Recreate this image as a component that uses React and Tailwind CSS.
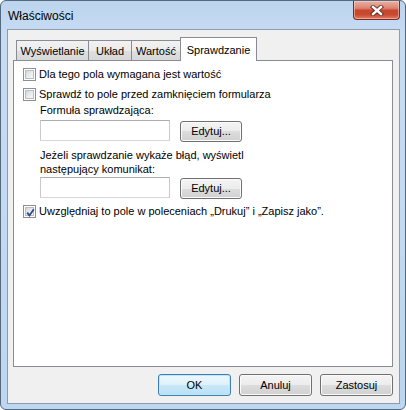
import React from "react";

const font = { fontFamily: '"Liberation Sans", Arial, sans-serif' };

function Check({ checked }) {
  return (
    <span className="relative flex h-[13px] w-[13px] shrink-0 border border-[#8e8f8f] bg-white p-px">
      <span className="flex-1 border border-[#b9bdc3] bg-[linear-gradient(135deg,#d2d5da_0%,#ebecee_55%,#f8f8f8_100%)]" />
      {checked && (
        <svg className="absolute left-[1px] top-[1px]" width="11" height="11" viewBox="0 0 11 11">
          <path d="M2.2 5.6 L4.4 8.4 L8.8 2.2" fill="none" stroke="#2c4a8e" strokeWidth="1.8" strokeLinejoin="miter" />
        </svg>
      )}
    </span>
  );
}

function Btn({ children, w = "w-[73px]", h = "h-[22px]", primary = false }) {
  return (
    <div
      className={`${w} ${h} flex items-center justify-center rounded-[3px] border text-[11px] text-black ${
        primary
          ? "border-[#3c7fb1] bg-[linear-gradient(to_bottom,#eef8fd_0%,#def1fb_50%,#c9e8f9_50%,#b9e0f6_100%)] shadow-[inset_0_0_0_1px_#bfe6fb]"
          : "border-[#707070] bg-[linear-gradient(to_bottom,#f4f4f4_0%,#ececec_50%,#dddddd_50%,#d0d0d0_100%)] shadow-[inset_0_0_0_1px_#fbfbfb]"
      }`}
    >
      {children}
    </div>
  );
}

function Input() {
  return <div className="h-[21px] w-[130px] border border-[#abadb3] border-l-[#c8cad0] border-r-[#c8cad0] border-b-[#d3d7dc] bg-white" />;
}

function Tab({ label, w, first }) {
  return (
    <div
      className={`${w} ${first ? "" : "-ml-px"} flex h-[20px] items-center justify-center border border-b-0 border-[#898c95] bg-[linear-gradient(to_bottom,#f2f2f2_0%,#ebebeb_50%,#dfdfdf_50%,#d8d8d8_100%)] pt-px text-[11px] text-black`}
    >
      {label}
    </div>
  );
}

export default function App() {
  return (
    <div className="h-[410px] w-[406px] bg-white" style={font}>
      <div className="flex h-full w-full flex-col rounded-[6px] border border-[#56687c] bg-[linear-gradient(to_bottom,#bcd4ee_0%,#c6dcf3_8%,#c2daf2_50%,#bdd6f1_100%)]">
        {/* title bar */}
        <div className="flex h-[28px] shrink-0 items-start justify-between pl-[7px] pr-[5px]">
          <div className="pt-[8px] text-[12px] leading-[14px] text-black">Właściwości</div>
          <div className="flex h-[19px] w-[47px] items-center justify-center rounded-b-[4px] border border-t-0 border-[#7a2a1e] bg-[linear-gradient(to_bottom,#eab1a5_0%,#dc8471_40%,#c9462c_52%,#c84a30_75%,#dd7c64_100%)] shadow-[inset_0_0_0_1px_rgba(255,220,210,0.5)]">
            <svg width="14" height="11" viewBox="0 0 14 11">
              <path d="M3 2 L11 9 M11 2 L3 9" stroke="#5a2a22" strokeWidth="4.2" strokeLinecap="square" />
              <path d="M3 2 L11 9 M11 2 L3 9" stroke="#ffffff" strokeWidth="2.4" strokeLinecap="square" />
            </svg>
          </div>
        </div>

        {/* client area */}
        <div className="ml-[6px] mr-[5px] flex h-[375px] shrink-0 flex-col border border-[#8f9ba8] bg-[#f0f0f0] pl-[5px] pr-[6px] pt-[7px] pb-[7px]">
          {/* tabs */}
          <div className="flex h-[23px] items-end pl-[3px]">
            <Tab label="Wyświetlanie" w="w-[73px]" first />
            <Tab label="Układ" w="w-[44px]" />
            <Tab label="Wartość" w="w-[50px]" />
            <div className="relative z-10 -mb-px -ml-px flex h-[24px] w-[77px] items-start justify-center border border-b-0 border-[#898c95] bg-white pt-[4px] text-[11px] text-black">
              Sprawdzanie
            </div>
          </div>

          {/* panel */}
          <div className="h-[307px] border border-[#898c95] bg-white pl-[9px] pt-[7px] text-[11px] text-black">
            <div className="flex h-[13px] items-center">
              <Check />
              <span className="ml-[3px] leading-[13px]">Dla tego pola wymagana jest wartość</span>
            </div>
            <div className="mt-[7px] flex h-[13px] items-center">
              <Check />
              <span className="ml-[3px] leading-[13px]">Sprawdź to pole przed zamknięciem formularza</span>
            </div>
            <div className="ml-[17px] mt-[3px] leading-[13px]">Formuła sprawdzająca:</div>
            <div className="ml-[17px] mt-[3px] flex items-start">
              <Input />
              <div className="ml-[10px] mt-px">
                <Btn w="w-[62px]" h="h-[21px]">Edytuj...</Btn>
              </div>
            </div>
            <div className="ml-[17px] mt-[6px] leading-[14px]">
              Jeżeli sprawdzanie wykaże błąd, wyświetl
              <br />
              następujący komunikat:
            </div>
            <div className="ml-[17px] mt-px flex items-start">
              <Input />
              <div className="ml-[10px] mt-px">
                <Btn w="w-[62px]" h="h-[21px]">Edytuj...</Btn>
              </div>
            </div>
            <div className="mt-[6px] flex h-[13px] items-center">
              <Check checked />
              <span className="ml-[3px] leading-[13px]">Uwzględniaj to pole w poleceniach „Drukuj” i „Zapisz jako”.</span>
            </div>
          </div>

          {/* buttons */}
          <div className="mt-[7px] flex justify-end gap-[8px]">
            <Btn primary>OK</Btn>
            <Btn>Anuluj</Btn>
            <Btn>Zastosuj</Btn>
          </div>
        </div>
      </div>
    </div>
  );
}
